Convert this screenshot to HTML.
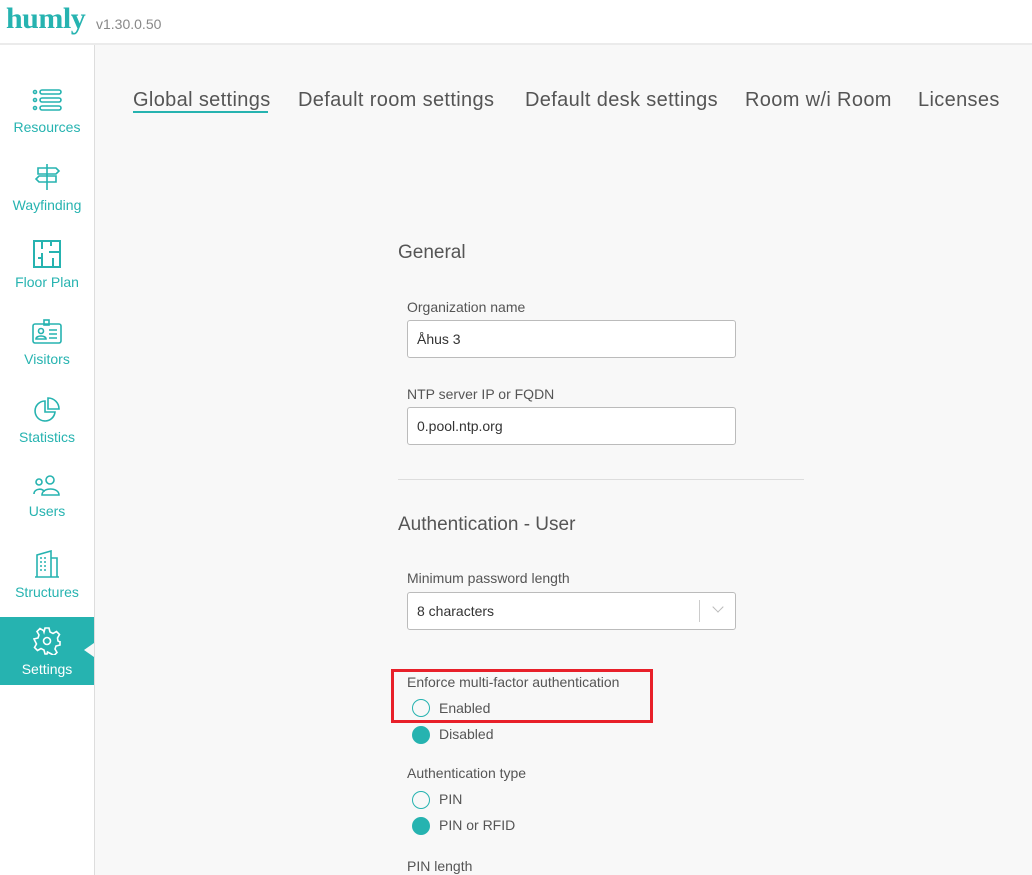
<!DOCTYPE html>
<html><head><meta charset="utf-8"><style>
*{margin:0;padding:0;box-sizing:border-box}
body{width:1032px;height:875px;overflow:hidden;background:#f8f8f8;font-family:"Liberation Sans",sans-serif;color:#555;position:relative}
.hdr{position:absolute;left:0;top:0;width:1032px;height:45px;background:#fff;border-bottom:2px solid #ebebeb}
.logo{position:absolute;left:6px;top:2px;font-family:"Liberation Serif",serif;font-weight:bold;font-size:30px;color:#26b3b0;letter-spacing:-0.5px}
.ver{position:absolute;left:96px;top:16px;font-size:14px;color:#888}
.side{position:absolute;left:0;top:45px;width:95px;height:830px;background:#fff;border-right:1px solid #ddd}
.it{position:absolute;left:0;width:94px;text-align:center;color:#26b3b0;font-size:14px}
.it svg{display:block;margin:0 auto 6px}
.act{background:#26b3b0;color:#fff}
.tab{position:absolute;top:89px;font-size:20px;color:#555;letter-spacing:0.35px}
.lbl{position:absolute;font-size:14px;color:#555}
.h{position:absolute;font-size:19px;color:#555}
.inp{position:absolute;left:407px;width:329px;height:38px;background:#fff;border:1px solid #bbb;border-radius:3px;font-size:14px;color:#333;padding:10px 9px}
.r{position:absolute;left:412px;width:18px;height:18px;border-radius:50%;border:1.5px solid #26b3b0}
.r.on{background:#26b3b0}
.rt{position:absolute;left:439px;font-size:14px;color:#555}
</style></head><body>
<div class="hdr"><div class="logo">humly</div><div class="ver">v1.30.0.50</div></div>
<div class="side">
<div class="it" style="top:44px"><svg width="30" height="22" viewBox="0 0 30 22" fill="none" stroke="#26b3b0" stroke-width="1.6" style="margin-bottom:8px"><circle cx="3" cy="3" r="1.5"/><circle cx="3" cy="11" r="1.5"/><circle cx="3" cy="19" r="1.5"/><rect x="8" y="1" width="21" height="4" rx="2"/><rect x="8" y="9" width="21" height="4" rx="2"/><rect x="8" y="17" width="21" height="4" rx="2"/></svg>Resources</div>
<div class="it" style="top:118px"><svg width="28" height="28" viewBox="0 0 28 28" fill="none" stroke="#26b3b0" stroke-width="1.6"><path d="M14 1v26M5 5h18l3 3-3 3H5zM23 13H6l-3 3 3 3h17z"/></svg>Wayfinding</div>
<div class="it" style="top:195px"><svg width="28" height="28" viewBox="0 0 28 28" fill="none" stroke="#26b3b0" stroke-width="2"><path d="M1 1h26v26H1zM9 1v8M9 13v14M9 18h-4M16 12h11M18 1v5M20 18v9"/></svg>Floor Plan</div>
<div class="it" style="top:274px"><svg width="30" height="26" viewBox="0 0 30 26" fill="none" stroke="#26b3b0" stroke-width="1.6"><rect x="1" y="5" width="28" height="19" rx="2"/><rect x="12" y="1" width="5" height="5"/><circle cx="9" cy="12" r="2.5"/><path d="M4 20c0-4 10-4 10 0zM17 11h8M17 15h8M17 19h8"/></svg>Visitors</div>
<div class="it" style="top:352px"><svg width="28" height="26" viewBox="0 0 28 26" fill="none" stroke="#26b3b0" stroke-width="1.6"><path d="M12 4a10 10 0 1 0 10 11H12z"/><path d="M15 1v11h11A11 11 0 0 0 15 1z"/></svg>Statistics</div>
<div class="it" style="top:430px"><svg width="28" height="22" viewBox="0 0 28 22" fill="none" stroke="#26b3b0" stroke-width="1.6"><circle cx="6" cy="7" r="3"/><circle cx="17" cy="5" r="4"/><path d="M1 19c0-6 10-6 10-2M9 20c0-8 17-8 17 0z"/></svg>Users</div>
<div class="it" style="top:505px"><svg width="26" height="28" viewBox="0 0 26 28" fill="none" stroke="#26b3b0" stroke-width="1.6"><path d="M1 27h24M3 27V5l14-4v26M17 8h6v19M6 8h2M10 8h2M6 12h2M10 12h2M6 16h2M10 16h2M6 20h2M10 20h2"/></svg>Structures</div>
<div class="it act" style="top:572px;height:68px;padding-top:10px"><svg width="28" height="28" viewBox="0 0 28 28" fill="none" stroke="#fff" stroke-width="1.6"><circle cx="14" cy="14" r="3.5"/><path d="M12 1h4l1 4 3 1.5 3.5-2 3 3-2 3.5L25 14l2 1v-1 4l-4 1-1 3 2 3.5-3 3-3.5-2L14.5 25 14 27h-2l-1-4-3-1.5-3.5 2-3-3 2-3.5L2 14l-1-2V12l4-1 1-3-2-3.5 3-3 3.5 2L11 5z"/></svg>Settings</div>
<div style="position:absolute;left:84px;top:598px;width:0;height:0;border-top:7px solid transparent;border-bottom:7px solid transparent;border-right:10px solid #f8f8f8"></div>
</div>
<div class="tab" style="left:133px">Global settings</div>
<div style="position:absolute;left:133px;top:111px;width:135px;height:2px;background:#26b3b0"></div>
<div class="tab" style="left:298px">Default room settings</div>
<div class="tab" style="left:525px">Default desk settings</div>
<div class="tab" style="left:745px">Room w/i Room</div>
<div class="tab" style="left:918px">Licenses</div>
<div class="h" style="left:398px;top:242px">General</div>
<div class="lbl" style="left:407px;top:299px">Organization name</div>
<div class="inp" style="top:320px">Åhus 3</div>
<div class="lbl" style="left:407px;top:386px">NTP server IP or FQDN</div>
<div class="inp" style="top:407px">0.pool.ntp.org</div>
<div style="position:absolute;left:398px;top:479px;width:406px;height:1px;background:#ddd"></div>
<div class="h" style="left:398px;top:514px">Authentication - User</div>
<div class="lbl" style="left:407px;top:570px">Minimum password length</div>
<div class="inp" style="top:592px;height:38px">8 characters<div style="position:absolute;left:291px;top:7px;width:1px;height:22px;background:#ccc"></div><div style="position:absolute;left:306px;top:10px;width:8px;height:8px;border-right:1.5px solid #bbb;border-bottom:1.5px solid #bbb;transform:rotate(45deg)"></div></div>
<div style="position:absolute;left:391px;top:669px;width:262px;height:54px;border:3px solid #e8202a"></div>
<div class="lbl" style="left:407px;top:674px">Enforce multi-factor authentication</div>
<div class="r" style="top:699px"></div><div class="rt" style="top:700px">Enabled</div>
<div class="r on" style="top:726px"></div><div class="rt" style="top:726px">Disabled</div>
<div class="lbl" style="left:407px;top:765px">Authentication type</div>
<div class="r" style="top:791px"></div><div class="rt" style="top:791px">PIN</div>
<div class="r on" style="top:817px"></div><div class="rt" style="top:817px">PIN or RFID</div>
<div class="lbl" style="left:407px;top:858px">PIN length</div>
</body></html>
